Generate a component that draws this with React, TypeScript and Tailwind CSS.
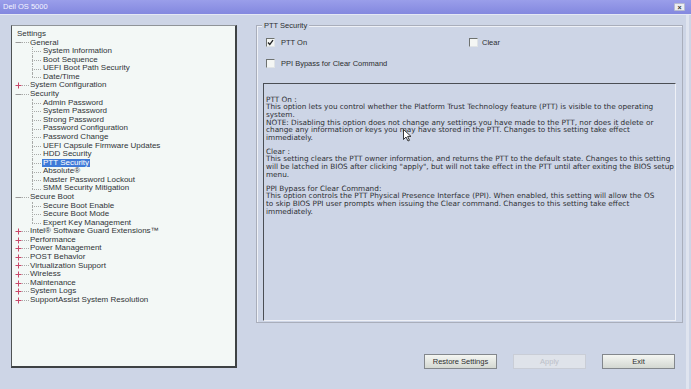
import React from 'react'

type Row = {
  label: string
  level: 0 | 1 | 2
  expand?: 'plus' | 'minus'
  last?: boolean
  selected?: boolean
}

const ROWS: Row[] = [
  { label: 'Settings', level: 0 },
  { label: 'General', level: 1, expand: 'minus' },
  { label: 'System Information', level: 2 },
  { label: 'Boot Sequence', level: 2 },
  { label: 'UEFI Boot Path Security', level: 2 },
  { label: 'Date/Time', level: 2, last: true },
  { label: 'System Configuration', level: 1, expand: 'plus' },
  { label: 'Security', level: 1, expand: 'minus' },
  { label: 'Admin Password', level: 2 },
  { label: 'System Password', level: 2 },
  { label: 'Strong Password', level: 2 },
  { label: 'Password Configuration', level: 2 },
  { label: 'Password Change', level: 2 },
  { label: 'UEFI Capsule Firmware Updates', level: 2 },
  { label: 'HDD Security', level: 2 },
  { label: 'PTT Security', level: 2, selected: true },
  { label: 'Absolute®', level: 2 },
  { label: 'Master Password Lockout', level: 2 },
  { label: 'SMM Security Mitigation', level: 2, last: true },
  { label: 'Secure Boot', level: 1, expand: 'minus' },
  { label: 'Secure Boot Enable', level: 2 },
  { label: 'Secure Boot Mode', level: 2 },
  { label: 'Expert Key Management', level: 2, last: true },
  { label: 'Intel® Software Guard Extensions™', level: 1, expand: 'plus' },
  { label: 'Performance', level: 1, expand: 'plus' },
  { label: 'Power Management', level: 1, expand: 'plus' },
  { label: 'POST Behavior', level: 1, expand: 'plus' },
  { label: 'Virtualization Support', level: 1, expand: 'plus' },
  { label: 'Wireless', level: 1, expand: 'plus' },
  { label: 'Maintenance', level: 1, expand: 'plus' },
  { label: 'System Logs', level: 1, expand: 'plus' },
  { label: 'SupportAssist System Resolution', level: 1, expand: 'plus' },
]

const DESC: string[][] = [
  [
    'PTT On :',
    'This option lets you control whether the Platform Trust Technology feature (PTT) is visible to the operating',
    'system.',
    'NOTE: Disabling this option does not change any settings you have made to the PTT, nor does it delete or',
    'change any information or keys you may have stored in the PTT. Changes to this setting take effect',
    'immediately.',
  ],
  [
    'Clear :',
    'This setting clears the PTT owner information, and returns the PTT to the default state. Changes to this setting',
    'will be latched in BIOS after clicking "apply", but will not take effect in the PTT until after exiting the BIOS setup',
    'menu.',
  ],
  [
    'PPI Bypass for Clear Command:',
    'This option controls the PTT Physical Presence Interface (PPI). When enabled, this setting will allow the OS',
    'to skip BIOS PPI user prompts when issuing the Clear command. Changes to this setting take effect',
    'immediately.',
  ],
]

function Expander({ kind }: { kind: 'plus' | 'minus' }) {
  return (
    <svg width="7" height="7" viewBox="0 0 7 7">
      <line x1="0.5" y1="3.5" x2="6.5" y2="3.5" stroke={kind === 'plus' ? '#c8486a' : '#9a9a9a'} strokeWidth="1" />
      {kind === 'plus' && <line x1="3.5" y1="0.5" x2="3.5" y2="6.5" stroke="#c8486a" strokeWidth="1" />}
    </svg>
  )
}

function TreeRow({ row }: { row: Row }) {
  const text = (
    <span
      className={`whitespace-nowrap leading-[8.6px] ${
        row.selected ? 'bg-[#3f7ad8] text-white px-[1px] -ml-[1px]' : 'text-[#303436]'
      }`}
    >
      {row.label}
    </span>
  )
  if (row.level === 0) {
    return <div className="flex items-center h-[8.58px] pl-[4px]">{text}</div>
  }
  if (row.level === 1) {
    return (
      <div className="flex items-center h-[8.58px]">
        <div className="w-[9px] pl-[2px] flex items-center">
          <Expander kind={row.expand!} />
        </div>
        <div className="w-[7px] border-t border-dotted border-[#a8aaa8] mr-[1px]" />
        {text}
      </div>
    )
  }
  return (
    <div className="flex items-center h-[8.58px]">
      <div className="w-[19px]" />
      <div className="w-[10px] h-full relative">
        <div
          className={`absolute left-0 top-0 border-l border-dotted border-[#a8aaa8] ${
            row.last ? 'h-1/2' : 'h-full'
          }`}
        />
        <div className="absolute left-0 top-1/2 w-[9px] border-t border-dotted border-[#a8aaa8]" />
      </div>
      <div className="w-[1px]" />
      {text}
    </div>
  )
}

function CheckBox({ checked }: { checked?: boolean }) {
  return (
    <div className="w-[9px] h-[9px] bg-[#f4f6f4] border-t border-l border-[#6e7270] border-r border-b border-r-[#e0e4e6] border-b-[#e0e4e6] flex items-center justify-center">
      {checked && (
        <svg width="7" height="7" viewBox="0 0 7 7">
          <path d="M1 3.5 L2.8 5.5 L6 1.2" fill="none" stroke="#202224" strokeWidth="1.3" />
        </svg>
      )}
    </div>
  )
}

function Button({ label, disabled }: { label: string; disabled?: boolean }) {
  return (
    <div
      className={`w-[73px] h-[15px] flex items-center justify-center text-[7.5px] border ${
        disabled
          ? 'bg-[#dfe3ea] border-[#c9cdd6] text-[#bcc0c8]'
          : 'bg-gradient-to-b from-[#f4f6f2] to-[#d4d8d2] border-[#83878c] text-[#2c2e30]'
      }`}
    >
      {label}
    </div>
  )
}

export default function App() {
  return (
    <div
      className="w-[691px] h-[389px] overflow-hidden bg-[#cdd5e6] flex flex-col relative"
      style={{ fontFamily: '"Liberation Sans", Arial, sans-serif' }}
    >
      {/* title bar */}
      <div className="h-[15px] shrink-0 bg-gradient-to-b from-[#9a9eea] to-[#8388df] border-b border-[#e4e8f4] flex items-center justify-between pl-[3px] pr-[6px]">
        <span className="text-[7.5px] text-[#f4f4ff] leading-none">Dell OS 5000</span>
        <div className="w-[11px] h-[8px] bg-[#eceef2] border border-[#b8bcd0] rounded-[1px] flex items-center justify-center text-[7px] leading-none text-[#303030] font-bold">
          ×
        </div>
      </div>

      <div className="flex-1 flex border-r-[3px] border-[#dfe4ef] mr-[2px]">
        {/* left tree */}
        <div className="pl-[11px] pt-[10px] w-[256px]">
          <div className="w-[226px] h-[343px] bg-[#f3f8f6] border-t border-[#8f9498] border-l border-l-[#4e5254] border-r-2 border-r-[#3e4244] border-b-2 border-b-[#3e4244] pt-[4px] pl-[1px] text-[8px]">
            {ROWS.map((r) => (
              <TreeRow key={r.label} row={r} />
            ))}
          </div>
        </div>

        {/* right */}
        <div className="flex-1 flex flex-col pt-[10px]">
          <div className="relative w-[427px] h-[298px] border border-[#a9aebb] shadow-[inset_1px_1px_0_#eef1f7] px-[6px] pt-[11px]">
            <span className="absolute -top-[5px] left-[5px] px-[2px] bg-[#cdd5e6] text-[7.5px] leading-[9px] text-[#2c2e30]">
              PTT Security
            </span>
            <div className="flex text-[7.5px] text-[#2c2e30]">
              <div className="w-[206px] flex items-center gap-[6px] pl-[3px]">
                <CheckBox checked />
                <span>PTT On</span>
              </div>
              <div className="flex items-center gap-[4px]">
                <CheckBox />
                <span>Clear</span>
              </div>
            </div>
            <div className="flex items-center gap-[6px] pl-[3px] mt-[10px] text-[7.5px] text-[#2c2e30]">
              <CheckBox />
              <span>PPI Bypass for Clear Command</span>
            </div>
            <div
              className="mt-[13px] h-[238px] border-t border-l border-[#4a4e54] border-r border-b border-r-[#eef0f6] border-b-[#eef0f6] pl-[2px] pt-[12px] text-[7.3px] text-[#2e3034] leading-[7.7px] flex flex-col gap-[6px]"
              style={{ fontFamily: '"DejaVu Sans", Verdana, sans-serif' }}
            >
              {DESC.map((para, i) => (
                <div key={i}>
                  {para.map((l, j) => (
                    <div key={j} className="whitespace-nowrap">
                      {l}
                    </div>
                  ))}
                </div>
              ))}
            </div>
          </div>

          <div className="mt-[31px] flex gap-[16px] pl-[168px]">
            <Button label="Restore Settings" />
            <Button label="Apply" disabled />
            <Button label="Exit" />
          </div>
        </div>
      </div>

      {/* mouse pointer */}
      <svg className="absolute left-[403px] top-[129px]" width="9" height="13" viewBox="0 0 9 13">
        <path d="M0.5 0.5 L0.5 10.5 L3 8 L5 12 L6.5 11.3 L4.6 7.4 L8 7.4 Z" fill="#ffffff" stroke="#222" strokeWidth="0.9" />
      </svg>
    </div>
  )
}
